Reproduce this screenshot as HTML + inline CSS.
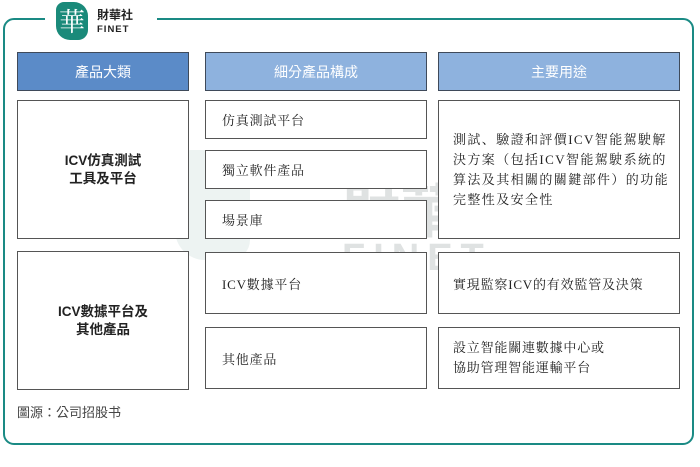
<!DOCTYPE html><html><head><meta charset="utf-8"><style>
body{margin:0;width:700px;height:467px;background:#fff;position:relative;overflow:hidden;font-family:"Liberation Sans","Noto Sans CJK TC",sans-serif}
.frame{position:absolute;left:3px;top:18px;width:691px;height:427px;border:2.5px solid #1a8a84;border-radius:11px;box-sizing:border-box}
.b{position:absolute;box-sizing:border-box;border:1.3px solid #555;background:#fff}
.h{color:#fff;font-size:14px;display:flex;align-items:center;justify-content:center;border-color:#3f4a5a}
.s{font-family:"Liberation Serif","Noto Serif CJK SC",serif;font-size:13px;color:#222;display:flex;align-items:center;padding-left:16px;letter-spacing:0.8px}
.c{font-size:13.5px;font-weight:bold;color:#222;display:flex;align-items:center;justify-content:center;text-align:center;line-height:18px}
.wm{position:absolute;color:#dfe2e2;font-weight:bold}
</style></head><body>
<div class="frame"></div>
<div style="position:absolute;left:45px;top:10px;width:112px;height:20px;background:#fff"></div>
<div style="position:absolute;left:56px;top:2px;width:32px;height:38px;background:#1a8a7a;border-radius:8px 14px 10px 14px;color:#fff;font-family:'Noto Serif CJK SC',serif;font-size:26px;line-height:38px;text-align:center">華</div>
<div style="position:absolute;left:97px;top:9px;font-size:12px;font-weight:bold;color:#222;line-height:13px">財華社<br><span style="font-size:9.5px;letter-spacing:1px">FINET</span></div>
<div style="position:absolute;left:175px;top:150px;width:75px;height:110px;background:#edf3f2;border-radius:16px 30px 20px 30px"></div>
<div class="wm" style="left:342px;top:182px;font-size:58px;line-height:62px">財華社</div>
<div class="wm" style="left:342px;top:238px;font-size:38px;letter-spacing:8px;line-height:40px">FINET</div>
<div class="b h" style="left:17px;top:52px;width:172px;height:39px;background:#5b8bc8">產品大類</div>
<div class="b h" style="left:205px;top:52px;width:222px;height:39px;background:#8eb2de">細分產品構成</div>
<div class="b h" style="left:438px;top:52px;width:242px;height:39px;background:#8eb2de">主要用途</div>
<div class="b c" style="left:17px;top:100px;width:172px;height:139px">ICV仿真測試<br>工具及平台</div>
<div class="b c" style="left:17px;top:251px;width:172px;height:139px">ICV數據平台及<br>其他產品</div>
<div class="b s" style="left:205px;top:100px;width:222px;height:39px">仿真測試平台</div>
<div class="b s" style="left:205px;top:150px;width:222px;height:39px">獨立軟件產品</div>
<div class="b s" style="left:205px;top:200px;width:222px;height:39px">場景庫</div>
<div class="b s" style="left:205px;top:252px;width:222px;height:62px">ICV數據平台</div>
<div class="b s" style="left:205px;top:327px;width:222px;height:62px">其他產品</div>
<div class="b s" style="left:438px;top:100px;width:242px;height:139px;line-height:20px;padding-left:14px;padding-right:2px;white-space:nowrap;letter-spacing:1.4px">測試、驗證和評價ICV智能駕駛解<br>決方案（包括ICV智能駕駛系統的<br>算法及其相關的關鍵部件）的功能<br>完整性及安全性</div>
<div class="b s" style="left:438px;top:252px;width:242px;height:62px;padding-left:14px">實現監察ICV的有效監管及決策</div>
<div class="b s" style="left:438px;top:327px;width:242px;height:62px;line-height:20px;padding-left:14px">設立智能關連數據中心或<br>協助管理智能運輸平台</div>
<div style="position:absolute;left:17px;top:402px;font-size:13px;color:#444">圖源：公司招股书</div>
</body></html>
